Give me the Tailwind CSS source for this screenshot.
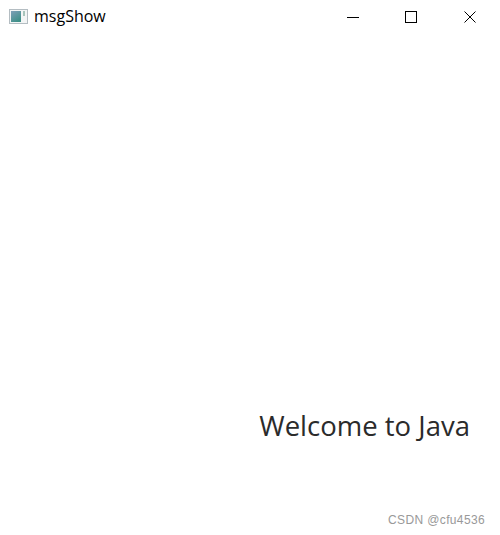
<!DOCTYPE html>
<html lang="en">
<head>
  <meta charset="UTF-8">
  <title>msgShow</title>
  <script src="https://cdn.jsdelivr.net/npm/@tailwindcss/browser@4"></script>
</head>
<body class="bg-white w-[500px] h-[535px] overflow-hidden flex flex-col font-['Open_Sans','Noto_Sans',sans-serif]">
  <!-- title bar -->
  <div class="flex items-center h-[33px] shrink-0">
    <svg class="ml-[9px] w-[19px] h-[15px]" viewBox="0 0 19 15">
      <defs>
        <linearGradient id="pane" x1="0" y1="0" x2="0.6" y2="1">
          <stop offset="0" stop-color="#7f9fb8"/>
          <stop offset="1" stop-color="#3f9088"/>
        </linearGradient>
      </defs>
      <rect x="0.5" y="0.5" width="18" height="14" fill="#f3f5f5" stroke="#b4bdc2"/>
      <rect x="2" y="2" width="10" height="11" fill="url(#pane)"/>
      <rect x="14" y="2" width="2" height="5" fill="#a8c4bb"/>
    </svg>
    <span class="ml-[6px] -mt-[2px] text-[16px] text-black">msgShow</span>
    <div class="ml-auto flex items-center">
      <svg class="w-[12px] h-[12px] mr-[46px]" viewBox="0 0 12 12"><path d="M0 6.5h12" stroke="#000" fill="none"/></svg>
      <svg class="w-[12px] h-[12px] mr-[47px]" viewBox="0 0 12 12"><rect x="0.5" y="0.5" width="11" height="11" stroke="#000" fill="none"/></svg>
      <svg class="w-[12px] h-[12px] mr-[24px]" viewBox="0 0 12 12"><path d="M0.5 0.5l11 11M11.5 0.5l-11 11" stroke="#000" fill="none"/></svg>
    </div>
  </div>
  <!-- content -->
  <div class="flex-1 flex flex-col items-end">
    <div class="mt-[373px] mr-[30px] text-[27.5px] leading-[40px] text-[#2b2b2b]">Welcome to Java</div>
    <div class="mt-[66px] mr-[15px] text-[12px] tracking-[0.36px] leading-[16px] text-[#999] font-['Liberation_Sans',sans-serif]">CSDN @cfu4536</div>
  </div>
</body>
</html>
